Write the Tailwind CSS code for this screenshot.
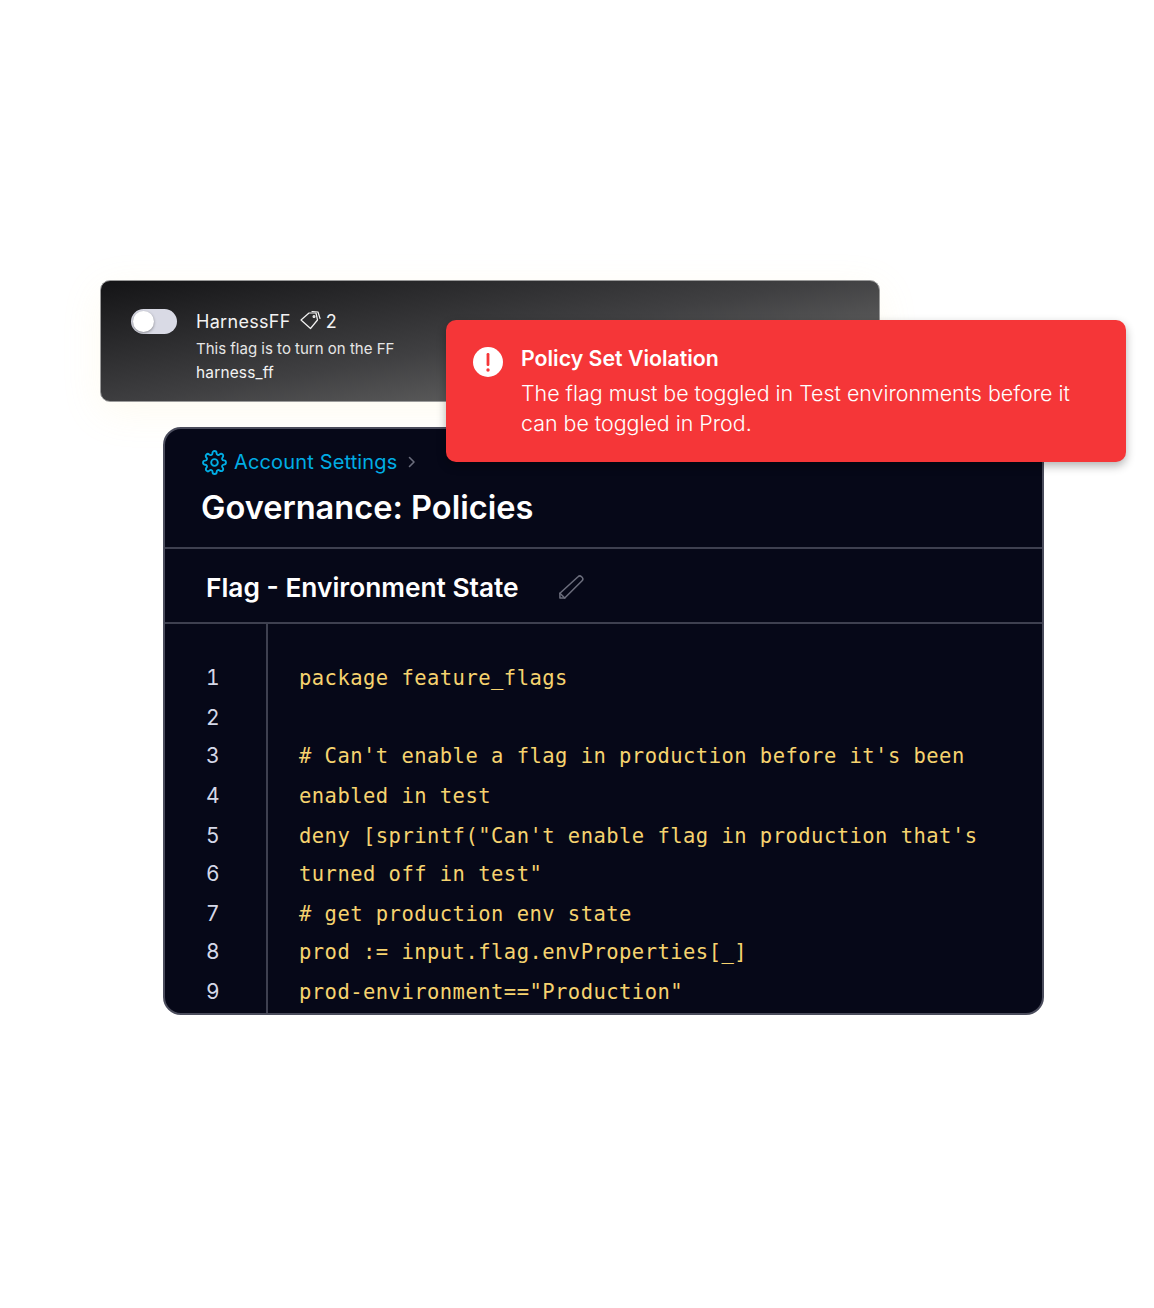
<!DOCTYPE html>
<html lang="en">
<head>
    <meta charset="UTF-8">
    <meta name="viewport" content="width=device-width, initial-scale=1.0">
    <title>Governance: Policies</title>
    <script src="https://cdn.jsdelivr.net/npm/@tailwindcss/browser@4"></script>
</head>
<body class="bg-white font-['Inter',sans-serif]">
    <div class="relative w-[1154px] h-[1308px] overflow-hidden pt-[280px] pl-[100px]">
        <!-- flag card -->
        <div class="w-[780px] h-[122px] rounded-[10px] border border-[#9a9a9a] bg-[linear-gradient(170deg,#141416_0%,#404042_50%,#5e5e5e_75%,#666666_100%)] shadow-[0_10px_40px_rgba(250,220,130,0.12)] flex pl-[30px] pt-[28px]">
            <div class="relative w-[46px] h-[25px] rounded-full bg-[#d9dae5] shrink-0">
                <div class="absolute left-[2px] top-[2px] w-[21px] h-[21px] rounded-full bg-white shadow-[0_1px_3px_rgba(0,0,0,0.4)]"></div>
            </div>
            <div class="ml-[19px] mt-[-1px] text-white">
                <div class="flex items-center h-[28px]">
                    <span class="text-[18px] leading-[28px] text-[#f3f3f3] tracking-[0.3px]">HarnessFF</span>
                    <svg class="ml-[9px] mt-[-3px]" width="21" height="21" viewBox="0 0 21 21" fill="none" stroke="#f3f3f3" stroke-width="1.2" stroke-linejoin="round" stroke-linecap="round">
                        <path d="M1 10 9 3h7l1.5 7-7 8.5z" />
                        <path d="M12 1.5l6 .5 2 6.5" />
                        <circle cx="14" cy="6.5" r="0.9" />
                    </svg>
                    <span class="ml-[5px] text-[18px] leading-[28px] text-[#f3f3f3]">2</span>
                </div>
                <div class="text-[15px] leading-[24px] mt-[1px] text-[#e6e6e6]">This flag is to turn on the FF</div>
                <div class="text-[15.4px] leading-[24px] tracking-[0.2px] text-[#f3f3f3]">harness_ff</div>
            </div>
        </div>

        <!-- policy card -->
        <div class="mt-[25px] ml-[63px] w-[881px] h-[588px] rounded-[18px] border-2 border-[#4a4c5c] bg-[#060818] overflow-hidden flex flex-col">
            <div class="h-[120px] shrink-0 border-b-2 border-[#3e4050] pl-[37px] pt-[19px]">
                <div class="flex items-center h-[28px]">
                    <svg width="25" height="25" viewBox="0 0 24 24" fill="none" stroke="#00ade4" stroke-width="1.8" stroke-linecap="round" stroke-linejoin="round">
                        <circle cx="12" cy="12" r="3.2" />
                        <path d="M19.4 15a1.65 1.65 0 0 0 .33 1.82l.06.06a2 2 0 1 1-2.83 2.83l-.06-.06a1.65 1.65 0 0 0-2.8 1.17V21a2 2 0 1 1-4 0v-.09a1.65 1.65 0 0 0-2.9-1.12l-.06.06a2 2 0 1 1-2.83-2.83l.06-.06a1.65 1.65 0 0 0-1.17-2.8H3a2 2 0 1 1 0-4h.09a1.65 1.65 0 0 0 1.12-2.9l-.06-.06a2 2 0 1 1 2.83-2.83l.06.06a1.65 1.65 0 0 0 1.82.33H9a1.65 1.65 0 0 0 1-1.51V3a2 2 0 1 1 4 0v.09a1.65 1.65 0 0 0 2.9 1.12l.06-.06a2 2 0 1 1 2.83 2.83l-.06.06a1.65 1.65 0 0 0-.33 1.82V9a1.65 1.65 0 0 0 1.51 1H21a2 2 0 1 1 0 4h-.09a1.65 1.65 0 0 0-1.51 1z" />
                    </svg>
                    <span class="ml-[7px] text-[20px] leading-[28px] text-[#00ade4] tracking-[0.15px]">Account Settings</span>
                    <svg class="ml-[10px]" width="10" height="14" viewBox="0 0 10 14" fill="none" stroke="#6b6d7c" stroke-width="1.6" stroke-linecap="round" stroke-linejoin="round">
                        <path d="M2.5 2.5 7 7l-4.5 4.5" />
                    </svg>
                </div>
                <h1 class="mt-[11px] ml-[-1px] text-[32.6px] leading-[40px] font-semibold text-white">Governance: Policies</h1>
            </div>
            <div class="h-[75px] shrink-0 border-b-2 border-[#3e4050] pl-[41px] flex items-center">
                <h2 class="mt-[4px] text-[26.3px] leading-[36px] font-semibold text-white">Flag - Environment State</h2>
                <svg class="ml-[39px] mt-[2px]" width="26" height="26" viewBox="0 0 27 27" fill="none" stroke="#6b6d7c" stroke-width="1.6" stroke-linecap="round" stroke-linejoin="round">
                    <path d="M2 25h5L25 7a2.6 2.6 0 0 0 0-3.6l-.6-.6a2.6 2.6 0 0 0-3.6 0L2 20z" />
                    <path d="M2 20l5 5" />
                </svg>
            </div>
            <div class="flex-1 flex min-h-0">
                <div class="w-[103px] shrink-0 border-r-2 border-[#3e4050] pt-[34px] pl-[41px] grid grid-rows-[40px_38px_40px_40px_38px_40px_38px_40px_40px] text-[21px] leading-[39px] tabular-nums text-[#d5d8e8]">
                    <div>1</div><div>2</div><div>3</div><div>4</div><div>5</div><div>6</div><div>7</div><div>8</div><div>9</div>
                </div>
                <div class="pt-[35px] pl-[31px] grid grid-rows-[40px_38px_40px_40px_38px_40px_38px_40px_40px] font-['DejaVu_Sans_Mono',monospace] text-[20.5px] tracking-[0.46px] leading-[39px] text-[#f6d36f] whitespace-nowrap">
                    <div>package feature_flags</div>
                    <div>&nbsp;</div>
                    <div># Can't enable a flag in production before it's been</div>
                    <div>enabled in test</div>
                    <div>deny [sprintf("Can't enable flag in production that's</div>
                    <div>turned off in test"</div>
                    <div># get production env state</div>
                    <div>prod := input.flag.envProperties[_]</div>
                    <div>prod-environment=="Production"</div>
                </div>
            </div>
        </div>

        <!-- toast over both cards -->
        <div class="absolute left-[446px] top-[320px] w-[680px] h-[142px] rounded-[10px] bg-[#f53638] shadow-[0_4px_10px_rgba(0,0,0,0.3)] flex pl-[27px] pt-[24px] text-white">
            <svg class="mt-[3px] shrink-0" width="30" height="30" viewBox="0 0 30 30">
                <circle cx="15" cy="15" r="15" fill="#fff" />
                <rect x="13.6" y="6" width="2.8" height="13" rx="1.2" fill="#f53638" />
                <circle cx="15" cy="23" r="1.7" fill="#f53638" />
            </svg>
            <div class="ml-[18px]">
                <div class="text-[21.3px] leading-[29px] font-semibold">Policy Set Violation</div>
                <div class="mt-[5px] w-[570px] text-[21.4px] leading-[30px] font-light">The flag must be toggled in Test environments before it can be toggled in Prod.</div>
            </div>
        </div>
    </div>
</body>
</html>
